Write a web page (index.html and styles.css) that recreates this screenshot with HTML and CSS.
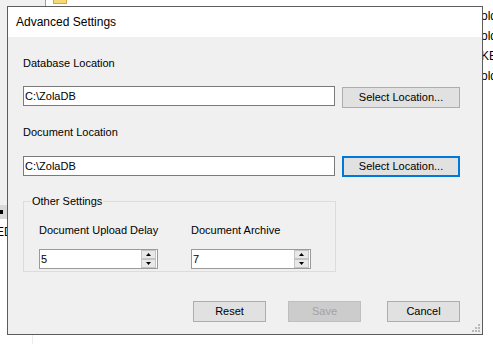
FILE: index.html
```html
<!DOCTYPE html>
<html>
<head>
<meta charset="utf-8">
<title>Advanced Settings</title>
<link rel="stylesheet" href="styles.css">
</head>
<body>
<div class="app">
  <div class="nav">
    <div class="nav-top"></div>
    <div class="nav-sel"><span class="mark"></span></div>
    <div class="nav-rest">
      <div class="nav-col"><span class="nav-text">ED</span></div>
    </div>
  </div>
  <div class="main">
    <div class="folder"></div>
    <div class="list">
      <div class="row">older</div>
      <div class="row">older</div>
      <div class="row">KB</div>
      <div class="row">older</div>
    </div>
  </div>
</div>

<div class="dialog">
  <div class="titlebar">Advanced Settings</div>
  <div class="body">
    <div class="label">Database Location</div>
    <div class="path-row first">
      <div class="textbox">C:\ZolaDB</div>
      <div class="btn btn-wide">Select Location...</div>
    </div>
    <div class="label label-2">Document Location</div>
    <div class="path-row second">
      <div class="textbox">C:\ZolaDB</div>
      <div class="btn btn-wide btn-focus">Select Location...</div>
    </div>
    <fieldset class="group">
      <legend class="legend">Other Settings</legend>
      <div class="group-grid">
        <div class="field">
          <div class="label">Document Upload Delay</div>
          <div class="spin">
            <span class="spin-value">5</span>
            <span class="spin-btns">
              <span class="spin-btn"><svg width="5" height="3" viewBox="0 0 5 3"><polygon points="2.5,0 5,3 0,3"/></svg></span>
              <span class="spin-btn"><svg width="5" height="3" viewBox="0 0 5 3"><polygon points="0,0 5,0 2.5,3"/></svg></span>
            </span>
          </div>
        </div>
        <div class="field">
          <div class="label">Document Archive</div>
          <div class="spin spin-2">
            <span class="spin-value">7</span>
            <span class="spin-btns">
              <span class="spin-btn"><svg width="5" height="3" viewBox="0 0 5 3"><polygon points="2.5,0 5,3 0,3"/></svg></span>
              <span class="spin-btn"><svg width="5" height="3" viewBox="0 0 5 3"><polygon points="0,0 5,0 2.5,3"/></svg></span>
            </span>
          </div>
        </div>
      </div>
    </fieldset>
    <div class="actions">
      <div class="btn btn-small">Reset</div>
      <div class="btn btn-small btn-disabled save">Save</div>
      <div class="btn btn-small cancel">Cancel</div>
    </div>
  </div>
  <svg class="grip" width="10" height="10" viewBox="0 0 10 10">
    <rect x="7" y="1" width="2" height="2"/>
    <rect x="4" y="4" width="2" height="2"/>
    <rect x="7" y="4" width="2" height="2"/>
    <rect x="1" y="7" width="2" height="2"/>
    <rect x="4" y="7" width="2" height="2"/>
    <rect x="7" y="7" width="2" height="2"/>
  </svg>
</div>
</body>
</html>
```

FILE: styles.css
```css
html, body {
  margin: 0;
  padding: 0;
}

body {
  width: 493px;
  height: 344px;
  overflow: hidden;
  position: relative;
  background: #ffffff;
  font-family: "Liberation Sans", Arial, sans-serif;
  color: #000000;
}

/* Background application */
.app {
  display: flex;
  height: 344px;
}

.nav {
  width: 46px;
  flex: 0 0 46px;
  display: flex;
  flex-direction: column;
}

.nav-top {
  height: 205px;
  background: #f0f0f0;
  border-right: 1px solid #a0a0a0;
}

.nav-sel {
  height: 14px;
  background: #d9d9d9;
  display: flex;
  align-items: center;
}

.mark {
  display: block;
  width: 3px;
  height: 4px;
  background: #000000;
}

.nav-rest {
  flex: 1;
  background: #ffffff;
  display: flex;
}

.nav-col {
  width: 32px;
  border-right: 1px solid #ececec;
  overflow: hidden;
}

.nav-text {
  display: block;
  margin: 6px 0 0 -4px;
  font-size: 12px;
  line-height: 14px;
}

.main {
  flex: 1 1 auto;
  min-width: 0;
  background: #ffffff;
  overflow: hidden;
}

.folder {
  width: 12px;
  height: 11px;
  margin: -9px 0 0 7px;
  background: #f8d775;
  border: 1px solid #d9a93c;
}

.list {
  padding: 2px 0 0 435px;
}

.row {
  height: 20px;
  line-height: 20px;
  font-size: 12px;
  white-space: nowrap;
}

/* Dialog window */
.dialog {
  position: absolute;
  left: 7px;
  top: 6px;
  width: 476px;
  height: 329px;
  box-sizing: border-box;
  border: 1px solid #5c5c5c;
  background: #f0f0f0;
  display: flex;
  flex-direction: column;
}

.titlebar {
  height: 30px;
  line-height: 30px;
  background: #ffffff;
  padding-left: 8px;
  font-size: 12px;
}

.body {
  padding: 20px 22px 0 15px;
  font-size: 11px;
}

.label {
  font-size: 11px;
  line-height: 13px;
  white-space: nowrap;
}

.label-2 {
  margin-top: 18px;
}

.path-row {
  display: flex;
  gap: 7px;
  align-items: flex-start;
}

.path-row.first {
  margin-top: 16px;
}

.path-row.second {
  margin-top: 17px;
}

.textbox {
  width: 312px;
  height: 20px;
  box-sizing: border-box;
  border: 1px solid #7a7a7a;
  background: #ffffff;
  padding-left: 1px;
  line-height: 18px;
  font-size: 11px;
}

.btn {
  height: 21px;
  box-sizing: border-box;
  border: 1px solid #adadad;
  background: #e1e1e1;
  font-size: 11px;
  line-height: 19px;
  text-align: center;
  white-space: nowrap;
}

.btn-wide {
  width: 118px;
  margin-top: 1px;
}

.btn-focus {
  border: 2px solid #0078d7;
  line-height: 17px;
  margin-top: 0;
}

.group {
  margin: 18px 0 0 0;
  width: 313px;
  box-sizing: border-box;
  border: 1px solid #dcdcdc;
  padding: 16px 0 2px 15px;
  min-width: 0;
}

.legend {
  margin-left: -8px;
  padding: 0 1px;
  font-size: 11px;
  line-height: 13px;
}

.group-grid {
  display: grid;
  grid-template-columns: 152px 120px;
}

.spin {
  margin-top: 12px;
  width: 119px;
  height: 20px;
  box-sizing: border-box;
  border: 1px solid #9a9a9a;
  background: #ffffff;
  display: flex;
  justify-content: space-between;
  align-items: stretch;
}

.spin-2 {
  width: 120px;
}

.spin-value {
  padding-left: 1px;
  line-height: 18px;
  font-size: 11px;
}

.spin-btns {
  width: 15px;
  display: flex;
  flex-direction: column;
  margin-right: 1px;
}

.spin-btn {
  flex: 1;
  box-sizing: border-box;
  border: 1px solid #c4c4c4;
  background: #e8e8e8;
  display: flex;
  align-items: center;
  justify-content: center;
}

.spin-btn svg {
  display: block;
  fill: #000000;
}

.actions {
  margin-top: 29px;
  display: flex;
  justify-content: flex-end;
}

.btn-small {
  width: 73px;
}

.save {
  margin-left: 22px;
}

.cancel {
  margin-left: 26px;
}

.btn-disabled {
  background: #cccccc;
  border-color: #bfbfbf;
  color: #a3a3a3;
}

.grip {
  position: absolute;
  right: 1px;
  bottom: 1px;
  fill: #b8b8b8;
}
```
